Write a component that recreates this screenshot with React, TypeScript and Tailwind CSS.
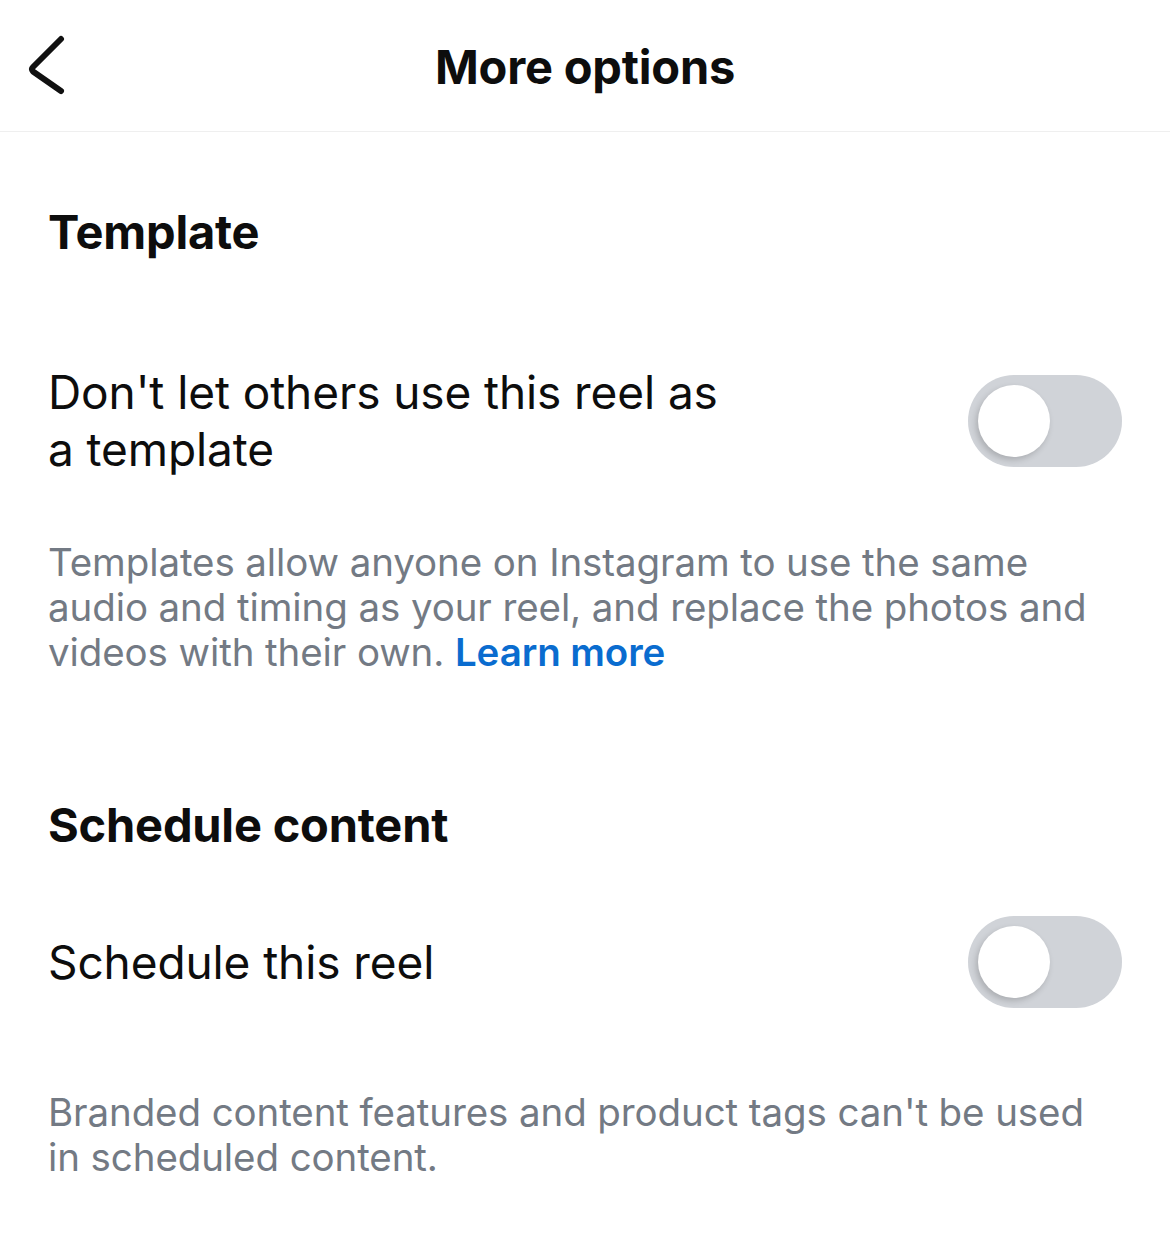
import React from "react";

function Toggle() {
  return (
    <div className="relative h-[92px] w-[154px] shrink-0 rounded-full bg-[#d0d3d8]">
      <div className="absolute left-[10px] top-[10px] h-[72px] w-[72px] rounded-full bg-white shadow-[-2px_3px_6px_rgba(0,0,0,0.18)]" />
    </div>
  );
}

export default function App() {
  return (
    <div
      className="min-h-[1241px] w-[1170px] bg-white text-black"
      style={{ fontFamily: "Inter, 'Noto Sans', sans-serif" }}
    >
      <header className="relative flex h-[132px] items-center justify-center border-b border-[#efefef]">
        <svg
          className="absolute left-[26px] top-[35px]"
          width="40"
          height="60"
          viewBox="0 0 40 60"
          fill="none"
        >
          <path
            d="M35 4 L7 32 Q5 34 7 36.5 L35 56"
            stroke="#111"
            strokeWidth="6"
            strokeLinecap="round"
            strokeLinejoin="round"
          />
        </svg>
        <h1 className="mt-[4px] text-[47px] font-bold tracking-[-0.2px] text-[#0d0d0d]">More options</h1>
      </header>

      <main className="pl-[48px] pr-[48px]">
        <h2 className="pt-[70px] text-[47px] font-bold leading-[60px] tracking-[-0.2px] text-[#0d0d0d]">Template</h2>

        <div className="mt-[102px] flex items-center justify-between">
          <p className="text-[46px] leading-[57px] tracking-[-0.1px] text-[#0d0d0d]">
            Don't let others use this reel as
            <br />a template
          </p>
          <Toggle />
        </div>

        <p className="mt-[62px] text-[38.5px] leading-[45px] tracking-[-0.1px] text-[#737a84]">
          Templates allow anyone on Instagram to use the same
          <br />
          audio and timing as your reel, and replace the photos and
          <br />
          videos with their own. <span className="font-semibold text-[#0a6ccf]">Learn more</span>
        </p>

        <h2 className="mt-[120px] text-[47px] font-bold leading-[60px] tracking-[-0.2px] text-[#0d0d0d]">
          Schedule content
        </h2>

        <div className="mt-[61px] flex items-center justify-between">
          <p className="text-[46px] leading-[57px] tracking-[-0.1px] text-[#0d0d0d]">Schedule this reel</p>
          <Toggle />
        </div>

        <p className="mt-[82px] text-[38.5px] leading-[45px] tracking-[-0.1px] text-[#737a84]">
          Branded content features and product tags can't be used
          <br />
          in scheduled content.
        </p>
      </main>
    </div>
  );
}
